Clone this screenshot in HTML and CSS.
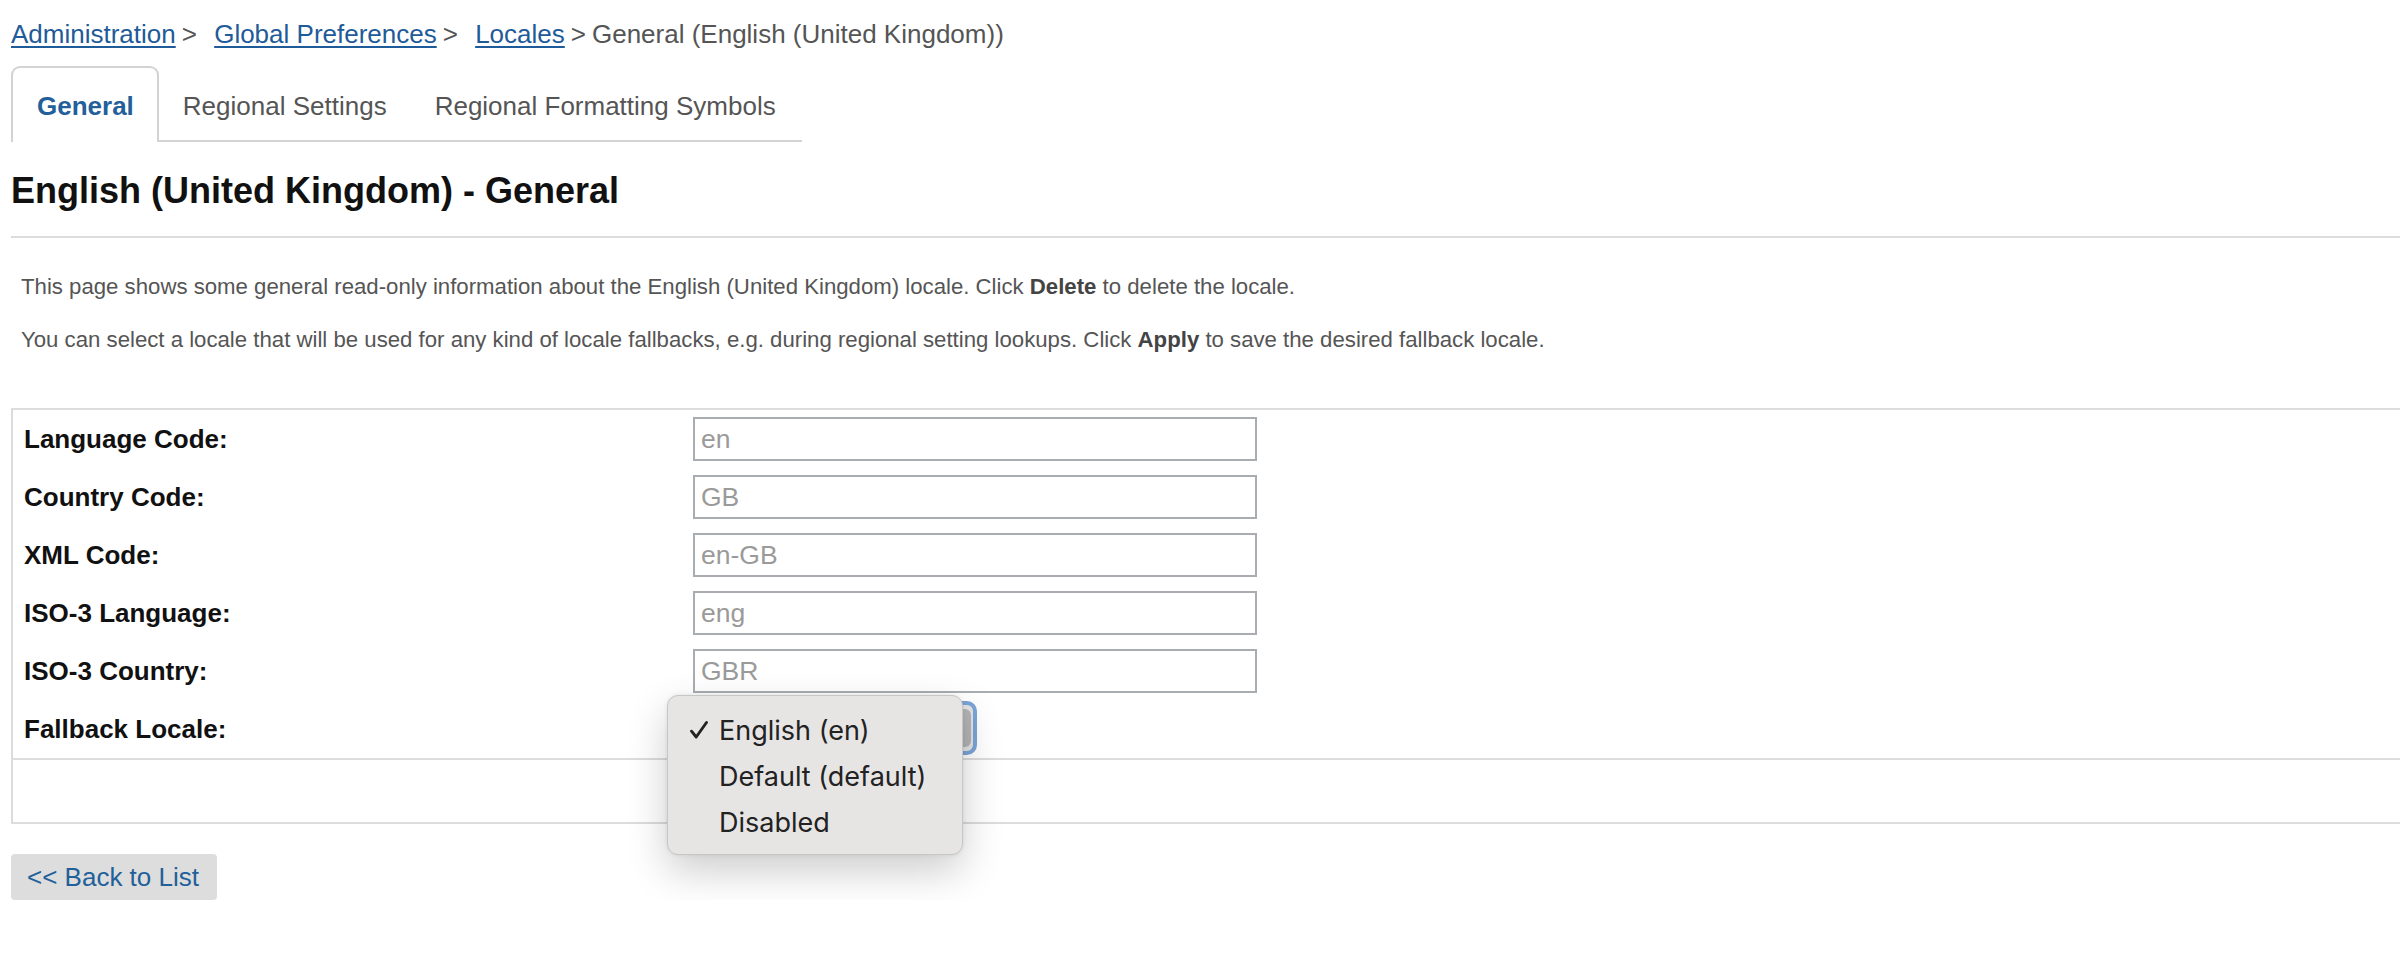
FILE: index.html
```html
<!DOCTYPE html>
<html lang="en">
<head>
<meta charset="utf-8">
<title>English (United Kingdom) - General</title>
<link rel="stylesheet" href="styles.css">
</head>
<body>
<div class="page">
  <nav class="breadcrumb">
    <a href="#">Administration</a><span class="sep">&gt;</span>
    <a href="#">Global Preferences</a><span class="sep">&gt;</span>
    <a href="#">Locales</a><span class="sep sep-tight">&gt;</span><span class="current">General (English (United Kingdom))</span>
  </nav>

  <ul class="tabs">
    <li class="tab active">General</li>
    <li class="tab">Regional Settings</li>
    <li class="tab">Regional Formatting Symbols</li>
  </ul>

  <h1 class="title">English (United Kingdom) - General</h1>

  <div class="intro">
    <p>This page shows some general read-only information about the English (United Kingdom) locale. Click <b>Delete</b> to delete the locale.</p>
    <p>You can select a locale that will be used for any kind of locale fallbacks, e.g. during regional setting lookups. Click <b>Apply</b> to save the desired fallback locale.</p>
  </div>

  <div class="form">
    <div class="rows">
      <div class="row"><span class="label">Language Code:</span><span class="field">en</span></div>
      <div class="row"><span class="label">Country Code:</span><span class="field">GB</span></div>
      <div class="row"><span class="label">XML Code:</span><span class="field">en-GB</span></div>
      <div class="row"><span class="label">ISO-3 Language:</span><span class="field">eng</span></div>
      <div class="row"><span class="label">ISO-3 Country:</span><span class="field">GBR</span></div>
      <div class="row row-last">
        <span class="label">Fallback Locale:</span>
        <div class="select-wrap">
          <div class="select"><span class="select-arrow"></span></div>
          <ul class="menu">
            <li class="item checked"><svg class="check" viewBox="0 0 20 20" width="20" height="20"><path d="M2.5 11.2 L7.2 17 L17.5 2.5" fill="none" stroke="#222" stroke-width="2.9" stroke-linecap="round" stroke-linejoin="round"/></svg>English (en)</li>
            <li class="item">Default (default)</li>
            <li class="item">Disabled</li>
          </ul>
        </div>
      </div>
    </div>
    <div class="actions"></div>
  </div>

  <div class="back"><a href="#" class="back-btn">&lt;&lt; Back to List</a></div>
</div>
</body>
</html>
```

FILE: styles.css
```css
html, body {
  margin: 0;
  padding: 0;
  background: #ffffff;
}

body {
  font-family: "Liberation Sans", Arial, sans-serif;
  color: #222;
}

.page {
  padding: 0 0 0 11px;
}

/* Breadcrumb */
.breadcrumb {
  padding-top: 19px;
  height: 30px;
  line-height: 30px;
  font-size: 26px;
  color: #555;
  white-space: nowrap;
}

.breadcrumb a {
  color: #1f5b98;
  text-decoration: underline;
  text-underline-offset: 3px;
}

.breadcrumb .sep {
  margin: 0 10px 0 6px;
}

.breadcrumb .sep-tight {
  margin: 0 6px 0 6px;
}

/* Tabs */
.tabs {
  list-style: none;
  margin: 17px 0 0 0;
  padding: 0;
  display: flex;
  width: 791px;
  border-bottom: 2px solid #d3d3d3;
}

.tab {
  padding: 24px 22px 22px 22px;
  font-size: 26px;
  line-height: 28px;
  color: #555;
  border: 2px solid transparent;
  border-bottom: none;
  margin-bottom: -2px;
  white-space: nowrap;
}

.tab.active {
  padding-left: 24px;
  padding-right: 23px;
  color: #235f9a;
  font-weight: bold;
  border-color: #d3d3d3;
  border-radius: 9px 9px 0 0;
  background: #fff;
}

/* Heading */
.title {
  margin: 28px 0 0 0;
  font-size: 36px;
  line-height: 42px;
  font-weight: bold;
  color: #111;
  padding-bottom: 24px;
  border-bottom: 2px solid #dcdcdc;
}

/* Intro */
.intro {
  padding: 36px 0 55px 10px;
  font-size: 22.2px;
  color: #555;
}

.intro p {
  margin: 0;
  line-height: 26px;
}

.intro p + p {
  margin-top: 27px;
}

.intro b {
  color: #444;
}

/* Form */
.form {
  border-top: 2px solid #dcdcdc;
  border-left: 2px solid #dcdcdc;
  border-bottom: 2px solid #dcdcdc;
}

.rows {
  padding: 7px 0 0 0;
  border-bottom: 2px solid #dcdcdc;
}

.row {
  display: grid;
  grid-template-columns: 680px 1fr;
  align-items: start;
  height: 58px;
}

.row-last {
  height: 51px;
}

.label {
  padding-left: 11px;
  font-size: 26px;
  line-height: 44px;
  font-weight: bold;
  color: #111;
}

.field {
  box-sizing: border-box;
  width: 564px;
  height: 44px;
  border: 2px solid #a9adb1;
  padding: 0 6px;
  font-size: 26.5px;
  line-height: 40px;
  color: #9a9a9a;
}

.select-wrap {
  position: relative;
  height: 44px;
}

.select {
  position: relative;
  box-sizing: border-box;
  margin-top: -6px;
  width: 284px;
  height: 54px;
  border-radius: 10px;
  border: 4px solid #7aa5d8;
  background: #e4e4e4;
}

.select-arrow {
  position: absolute;
  right: 2px;
  top: 4px;
  width: 10px;
  height: 38px;
  border-radius: 0 6px 6px 0;
  background: #b4b4b4;
}

.menu {
  position: absolute;
  left: -26px;
  top: -12px;
  width: 296px;
  box-sizing: border-box;
  margin: 0;
  padding: 12px 0 8px 0;
  list-style: none;
  background: #e6e5e4;
  border: 1px solid #c6c6c6;
  border-radius: 11px;
  box-shadow: 0 16px 40px rgba(0, 0, 0, 0.2), 0 0 4px rgba(0, 0, 0, 0.08);
  font-family: Inter, "Noto Sans", sans-serif;
  font-size: 27px;
  color: #222;
}

.item {
  position: relative;
  height: 46px;
  line-height: 46px;
  padding-left: 51px;
  white-space: nowrap;
}

.check {
  position: absolute;
  left: 21px;
  top: 12px;
}

.actions {
  height: 62px;
}

/* Back button */
.back {
  padding: 30px 0 0 0;
}

.back-btn {
  display: inline-block;
  background: #dddddd;
  border-radius: 4px;
  padding: 0 18px 0 16px;
  height: 46px;
  line-height: 46px;
  font-size: 26px;
  color: #22609a;
  text-decoration: none;
}
```
